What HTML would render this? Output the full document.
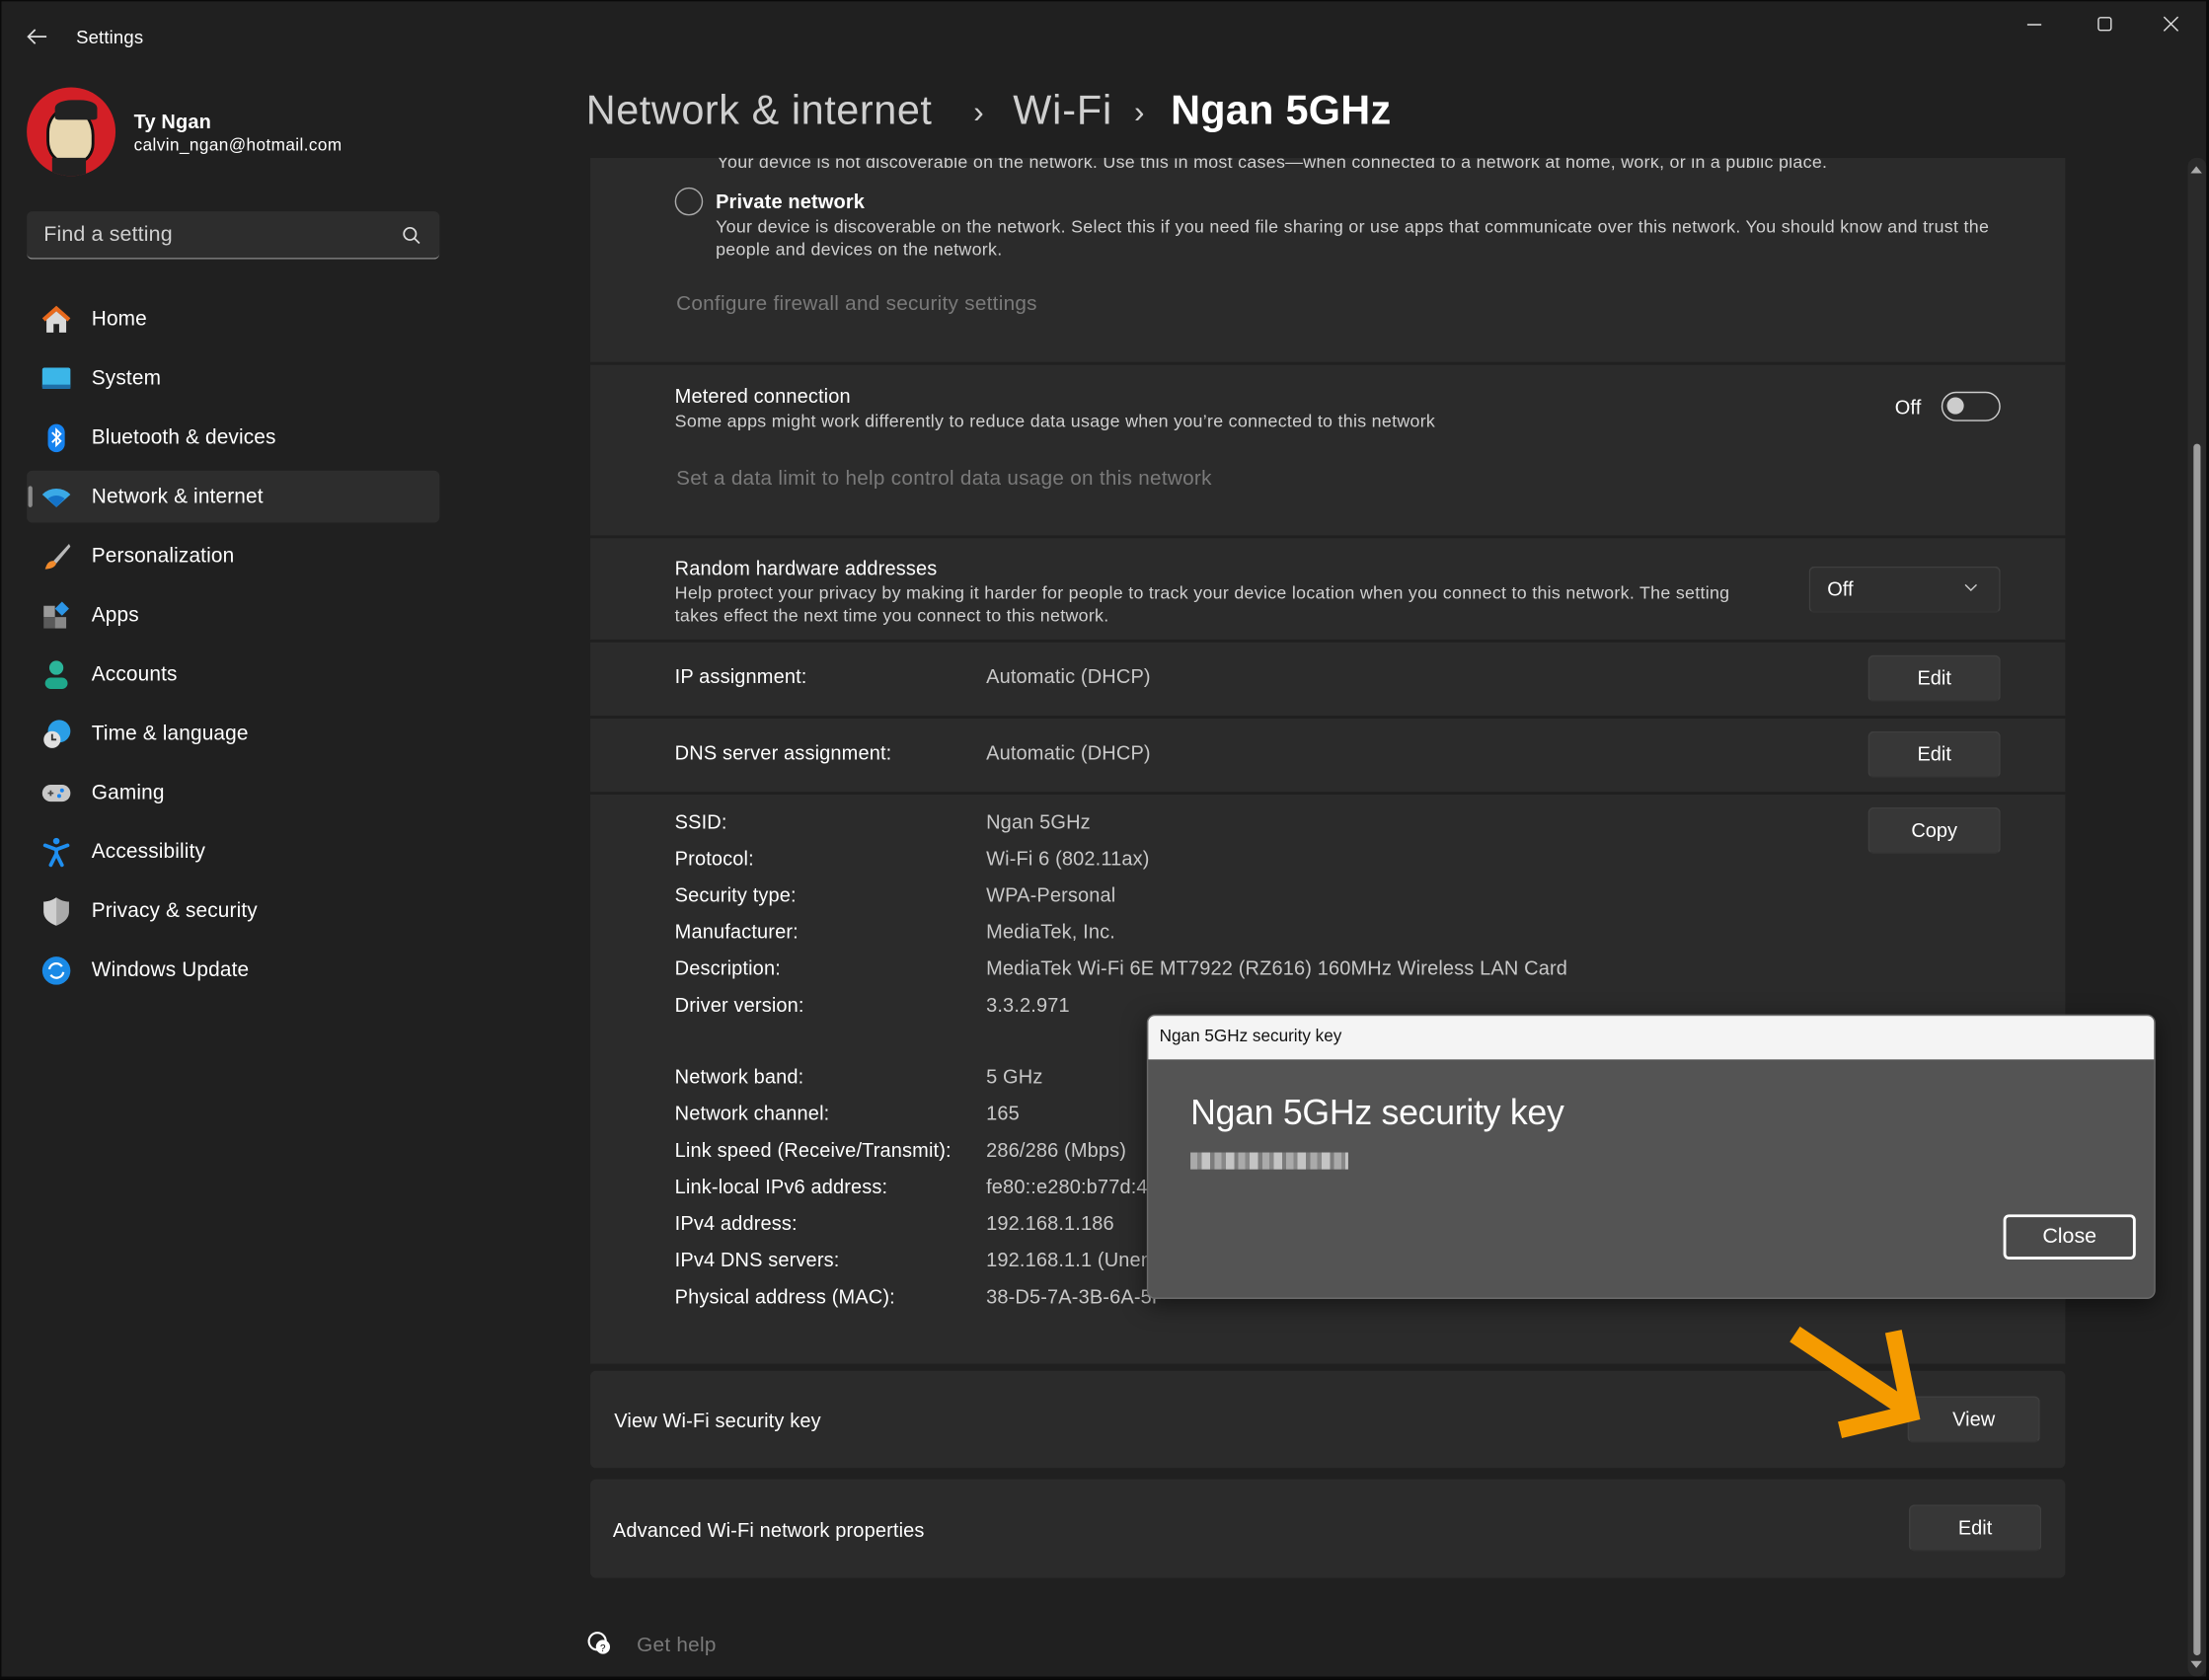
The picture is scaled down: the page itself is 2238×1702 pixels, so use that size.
<!DOCTYPE html>
<html><head><meta charset="utf-8"><style>
html,body{margin:0;padding:0;background:#000;width:2238px;height:1702px;overflow:hidden}
#w{position:absolute;left:0;top:0;width:1568px;height:1192px;transform:scale(1.42730);transform-origin:0 0;background:#202020;font-family:"Liberation Sans",sans-serif;color:#fff;overflow:hidden}
.t{position:absolute;white-space:nowrap;font-size:14px;line-height:18px;letter-spacing:0.1px}
.n{font-size:14.6px;letter-spacing:0.1px}
.s{font-size:12.5px;line-height:16px;color:#d0d0d0;letter-spacing:0.2px}
.g{color:#7a7a7a;font-size:14.5px;letter-spacing:0.2px}
.v{color:#c8c8c8}
.b{font-size:29px;line-height:36px;color:#cfcfcf;top:61px}
.card{position:absolute;left:419px;width:1047px;background:#2b2b2b}
.btn{position:absolute;background:#373737;border:1px solid #3f3f3f;border-bottom-color:#333;border-radius:4px;font-size:14px;line-height:31px;text-align:center;color:#fff}
.ic{position:absolute;left:29px;width:22px;height:22px}
</style></head><body><div id="w">
<div style="position:absolute;left:0;top:0;right:0;bottom:0;border:1px solid #0a0a0a;border-right-width:2px;border-bottom-width:2px"></div>
<svg style="position:absolute;left:18px;top:19px" width="16" height="14"><path d="M15 7H2M7 2L2 7l5 5" stroke="#ddd" stroke-width="1.2" fill="none"/></svg>
<div class="t" style="left:54px;top:18px;font-size:13px">Settings</div>
<svg style="position:absolute;left:1436px;top:10px" width="120" height="16"><path d="M3 7.5h10" stroke="#ddd"/><rect x="53.5" y="2.5" width="9" height="9" rx="1.5" stroke="#ddd" fill="none"/><path d="M100 2l10 10M110 2L100 12" stroke="#ddd"/></svg>
<div style="position:absolute;left:19px;top:62px;width:63px;height:63px;border-radius:50%;background:#d31f26;overflow:hidden">
<div style="position:absolute;left:14px;top:14px;width:30px;height:36px;border-radius:45% 50% 35% 40%;background:#e8d7b0;border:2px solid #111"></div>
<div style="position:absolute;left:20px;top:9px;width:30px;height:14px;border-radius:40% 40% 10% 10%;background:#222"></div>
<div style="position:absolute;left:18px;top:50px;width:24px;height:14px;background:#222"></div></div>
<div class="t" style="left:95px;top:77px;font-weight:bold">Ty Ngan</div>
<div class="t" style="left:95px;top:95px;font-size:12px;line-height:16px;letter-spacing:0.3px">calvin_ngan@hotmail.com</div>
<div style="position:absolute;left:19px;top:150px;width:293px;height:33px;background:#2d2d2d;border-radius:4px;border-bottom:1px solid #8a8a8a"></div>
<div class="t" style="left:31px;top:158px;font-size:15px;color:#cfcfcf">Find a setting</div>
<svg style="position:absolute;left:285px;top:160px" width="14" height="14"><circle cx="6" cy="6" r="4.3" stroke="#ddd" stroke-width="1.2" fill="none"/><path d="M9.2 9.2l3.5 3.5" stroke="#ddd" stroke-width="1.2"/></svg>
<div style="position:absolute;left:19px;top:334px;width:293px;height:37px;background:#2d2d2d;border-radius:4px"></div>
<div style="position:absolute;left:20px;top:345px;width:3px;height:15px;background:#8a8a8a;border-radius:2px"></div>
<svg class="ic" style="top:216px" viewBox="0 0 22 22"><path d="M2 11L11 3l9 8" stroke="#e8691c" stroke-width="3" fill="none"/><path d="M4 11v9h5v-6h4v6h5v-9l-7-6z" fill="#d9d9d9"/></svg>
<svg class="ic" style="top:258px" viewBox="0 0 22 22"><rect x="1" y="3" width="20" height="15" rx="1.5" fill="#3bb6e8"/><rect x="1" y="15" width="20" height="3" fill="#1e6fa8"/></svg>
<svg class="ic" style="top:300px" viewBox="0 0 22 22"><rect x="5" y="1" width="12" height="20" rx="6" fill="#1683f0"/><path d="M8 7l6 6-3 3V5l3 3-6 6" stroke="#fff" stroke-width="1.3" fill="none"/></svg>
<svg class="ic" style="top:342px" viewBox="0 0 22 22"><path d="M1 9a14 14 0 0 1 20 0l-10 9z" fill="#3aa9e6"/><path d="M5 12a9 9 0 0 1 12 0l-6 6z" fill="#1472c7"/></svg>
<svg class="ic" style="top:384px" viewBox="0 0 22 22"><path d="M20 2L9 14l2 2L21 4z" fill="#b9b9b9"/><path d="M9 14c-4 0-5 3-6 6 3 0 7-1 8-4z" fill="#f08a2c"/></svg>
<svg class="ic" style="top:426px" viewBox="0 0 22 22"><rect x="2" y="4" width="8" height="8" fill="#9a9a9a"/><rect x="2" y="12" width="8" height="8" fill="#5a5a5a"/><rect x="10" y="12" width="8" height="8" fill="#888"/><path d="M15 1l5 5-5 5-5-5z" fill="#2c95e6"/></svg>
<svg class="ic" style="top:468px" viewBox="0 0 22 22"><circle cx="11" cy="6" r="5" fill="#2bb59a"/><rect x="3" y="13" width="16" height="8" rx="4" fill="#1fa88b"/></svg>
<svg class="ic" style="top:510px" viewBox="0 0 22 22"><circle cx="13" cy="9" r="8" fill="#2a9ee6"/><circle cx="8" cy="15" r="6" fill="#e0e0e0"/><path d="M8 11v4h3" stroke="#333" stroke-width="1.3" fill="none"/></svg>
<svg class="ic" style="top:552px" viewBox="0 0 22 22"><rect x="1" y="5" width="20" height="12" rx="6" fill="#c8c8c8"/><path d="M5 11h4M7 9v4" stroke="#444" stroke-width="1.2"/><circle cx="15" cy="9" r="1.4" fill="#1683f0"/><circle cx="13" cy="13" r="1.4" fill="#1683f0"/></svg>
<svg class="ic" style="top:594px" viewBox="0 0 22 22"><circle cx="11" cy="3" r="2.3" fill="#1f8ff0"/><path d="M3 6l8 3 8-3M11 9v3l-4 8M11 12l4 8" stroke="#1f8ff0" stroke-width="2.6" fill="none" stroke-linecap="round"/></svg>
<svg class="ic" style="top:636px" viewBox="0 0 22 22"><path d="M11 1c3 2 6 3 9 3v7c0 5-4 8-9 10-5-2-9-5-9-10V4c3 0 6-1 9-3z" fill="#aaa"/><path d="M11 1v20C6 19 2 16 2 11V4c3 0 6-1 9-3z" fill="#d0d0d0"/></svg>
<svg class="ic" style="top:678px" viewBox="0 0 22 22"><circle cx="11" cy="11" r="10" fill="#1a8ae6"/><path d="M6 10a5 5 0 0 1 9-2M16 12a5 5 0 0 1-9 2" stroke="#fff" stroke-width="1.6" fill="none"/></svg>
<div class="t n" style="left:65px;top:218px">Home</div>
<div class="t n" style="left:65px;top:260px">System</div>
<div class="t n" style="left:65px;top:302px">Bluetooth &amp; devices</div>
<div class="t n" style="left:65px;top:344px">Network &amp; internet</div>
<div class="t n" style="left:65px;top:386px">Personalization</div>
<div class="t n" style="left:65px;top:428px">Apps</div>
<div class="t n" style="left:65px;top:470px">Accounts</div>
<div class="t n" style="left:65px;top:512px">Time &amp; language</div>
<div class="t n" style="left:65px;top:554px">Gaming</div>
<div class="t n" style="left:65px;top:596px">Accessibility</div>
<div class="t n" style="left:65px;top:638px">Privacy &amp; security</div>
<div class="t n" style="left:65px;top:680px">Windows Update</div>
<div class="t b" style="left:416px;letter-spacing:0.4px">Network &amp; internet</div>
<div class="t" style="left:691px;top:64px;font-size:22px;line-height:32px;color:#cfcfcf">›</div>
<div class="t b" style="left:719px;letter-spacing:0.6px">Wi-Fi</div>
<div class="t" style="left:805px;top:64px;font-size:22px;line-height:32px;color:#cfcfcf">›</div>
<div class="t b" style="left:831px;font-weight:bold;color:#fff;letter-spacing:0.2px">Ngan 5GHz</div>
<div class="card" style="top:112px;height:145px"></div>
<div class="card" style="top:259px;height:121px"></div>
<div class="card" style="top:382px;height:72px"></div>
<div class="card" style="top:456px;height:52px"></div>
<div class="card" style="top:510px;height:52px"></div>
<div class="card" style="top:564px;height:404px"></div>
<div class="card" style="top:973px;height:69px;border-radius:4px"></div>
<div class="card" style="top:1050px;height:70px;border-radius:4px"></div>
<div class="t s" style="left:509px;top:107px">Your device is not discoverable on the network. Use this in most cases—when connected to a network at home, work, or in a public place.</div>
<div style="position:absolute;left:419px;top:104px;width:1047px;height:8px;background:#202020"></div>
<div style="position:absolute;left:479px;top:133px;width:20px;height:20px;border:1px solid #aaa;border-radius:50%;box-sizing:border-box"></div>
<div class="t" style="left:508px;top:134px;font-weight:bold">Private network</div>
<div class="t s" style="left:508px;top:153px">Your device is discoverable on the network. Select this if you need file sharing or use apps that communicate over this network. You should know and trust the</div>
<div class="t s" style="left:508px;top:169px">people and devices on the network.</div>
<div class="t g" style="left:480px;top:207px">Configure firewall and security settings</div>
<div class="t" style="left:479px;top:272px">Metered connection</div>
<div class="t s" style="left:479px;top:291px">Some apps might work differently to reduce data usage when you’re connected to this network</div>
<div class="t" style="left:1345px;top:280px">Off</div>
<div style="position:absolute;left:1378px;top:278px;width:42px;height:21px;border:1px solid #ccc;border-radius:11px;box-sizing:border-box"></div>
<div style="position:absolute;left:1382px;top:282px;width:12px;height:12px;background:#ccc;border-radius:50%"></div>
<div class="t g" style="left:480px;top:331px">Set a data limit to help control data usage on this network</div>
<div class="t" style="left:479px;top:394px">Random hardware addresses</div>
<div class="t s" style="left:479px;top:413px">Help protect your privacy by making it harder for people to track your device location when you connect to this network. The setting</div>
<div class="t s" style="left:479px;top:429px">takes effect the next time you connect to this network.</div>
<div class="btn" style="left:1284px;top:402px;width:134px;height:31px;text-align:left;background:#2f2f2f"><span style="margin-left:12px">Off</span></div>
<svg style="position:absolute;left:1394px;top:414px" width="10" height="7"><path d="M1 1l4 4 4-4" stroke="#ccc" fill="none"/></svg>
<div class="t" style="left:479px;top:471px">IP assignment:</div>
<div class="t v" style="left:700px;top:471px">Automatic (DHCP)</div>
<div class="btn" style="left:1326px;top:465px;width:92px;height:31px">Edit</div>
<div class="t" style="left:479px;top:525px">DNS server assignment:</div>
<div class="t v" style="left:700px;top:525px">Automatic (DHCP)</div>
<div class="btn" style="left:1326px;top:519px;width:92px;height:31px">Edit</div>
<div class="btn" style="left:1326px;top:573px;width:92px;height:31px">Copy</div>
<div class="t" style="left:479px;top:574px">SSID:</div><div class="t v" style="left:700px;top:574px">Ngan 5GHz</div>
<div class="t" style="left:479px;top:600px">Protocol:</div><div class="t v" style="left:700px;top:600px">Wi-Fi 6 (802.11ax)</div>
<div class="t" style="left:479px;top:626px">Security type:</div><div class="t v" style="left:700px;top:626px">WPA-Personal</div>
<div class="t" style="left:479px;top:652px">Manufacturer:</div><div class="t v" style="left:700px;top:652px">MediaTek, Inc.</div>
<div class="t" style="left:479px;top:678px">Description:</div><div class="t v" style="left:700px;top:678px">MediaTek Wi-Fi 6E MT7922 (RZ616) 160MHz Wireless LAN Card</div>
<div class="t" style="left:479px;top:704px">Driver version:</div><div class="t v" style="left:700px;top:704px">3.3.2.971</div>
<div class="t" style="left:479px;top:755px">Network band:</div><div class="t v" style="left:700px;top:755px">5 GHz</div>
<div class="t" style="left:479px;top:781px">Network channel:</div><div class="t v" style="left:700px;top:781px">165</div>
<div class="t" style="left:479px;top:807px">Link speed (Receive/Transmit):</div><div class="t v" style="left:700px;top:807px">286/286 (Mbps)</div>
<div class="t" style="left:479px;top:833px">Link-local IPv6 address:</div><div class="t v" style="left:700px;top:833px">fe80::e280:b77d:4</div>
<div class="t" style="left:479px;top:859px">IPv4 address:</div><div class="t v" style="left:700px;top:859px">192.168.1.186</div>
<div class="t" style="left:479px;top:885px">IPv4 DNS servers:</div><div class="t v" style="left:700px;top:885px">192.168.1.1 (Unenc</div>
<div class="t" style="left:479px;top:911px">Physical address (MAC):</div><div class="t v" style="left:700px;top:911px">38-D5-7A-3B-6A-5F</div>
<div class="t" style="left:436px;top:999px">View Wi-Fi security key</div>
<div class="btn" style="left:1354px;top:991px;width:92px;height:31px">View</div>
<div class="t" style="left:435px;top:1077px">Advanced Wi-Fi network properties</div>
<div class="btn" style="left:1355px;top:1068px;width:92px;height:31px">Edit</div>
<svg style="position:absolute;left:416px;top:1157px" width="20" height="20"><circle cx="8" cy="8" r="6" stroke="#fff" stroke-width="1.5" fill="none"/><circle cx="12" cy="12" r="5" fill="#fff"/><text x="10" y="15" font-size="7" fill="#000" font-family="Liberation Sans">?</text></svg>
<div class="t g" style="left:452px;top:1159px">Get help</div>
<div style="position:absolute;left:1553px;top:112px;width:13px;height:1078px;background:#2a2a2a;border-radius:6px"></div>
<div style="position:absolute;left:1557px;top:315px;width:5px;height:860px;background:#9e9e9e;border-radius:3px"></div>
<svg style="position:absolute;left:1554px;top:116px" width="10" height="8"><path d="M1 7l4-5 4 5z" fill="#aaa"/></svg>
<svg style="position:absolute;left:1554px;top:1178px" width="10" height="8"><path d="M1 1l4 5 4-5z" fill="#aaa"/></svg>
<div style="position:absolute;left:814px;top:720px;width:716px;height:202px;background:#545454;border-radius:6px;overflow:hidden;box-shadow:0 4px 16px rgba(0,0,0,.5);border:1px solid #6a6a6a;box-sizing:border-box">
<div style="height:31px;background:#f4f4f4"></div></div>
<div class="t" style="left:823px;top:727px;font-size:12px;line-height:16px;color:#111;letter-spacing:0">Ngan 5GHz security key</div>
<div class="t" style="left:845px;top:774px;font-size:25px;line-height:32px;letter-spacing:-0.2px">Ngan 5GHz security key</div>
<div style="position:absolute;left:845px;top:818px;width:112px;height:12px;background:repeating-linear-gradient(90deg,#aaa 0 5px,#888 5px 8px,#c4c4c4 8px 14px,#7c7c7c 14px 17px)"></div>
<div style="position:absolute;left:1422px;top:862px;width:94px;height:32px;border:2px solid #fff;border-radius:4px;box-sizing:border-box;background:#4a4a4a;text-align:center;font-size:15px;line-height:28px">Close</div>
<svg style="position:absolute;left:1260px;top:935px" width="120" height="90"><path d="M14 12L92 64" stroke="#f59b00" stroke-width="13" fill="none"/><path d="M84 10L96 68 46 80" stroke="#f59b00" stroke-width="12" fill="none" stroke-linejoin="miter"/></svg>
</div></body></html>
